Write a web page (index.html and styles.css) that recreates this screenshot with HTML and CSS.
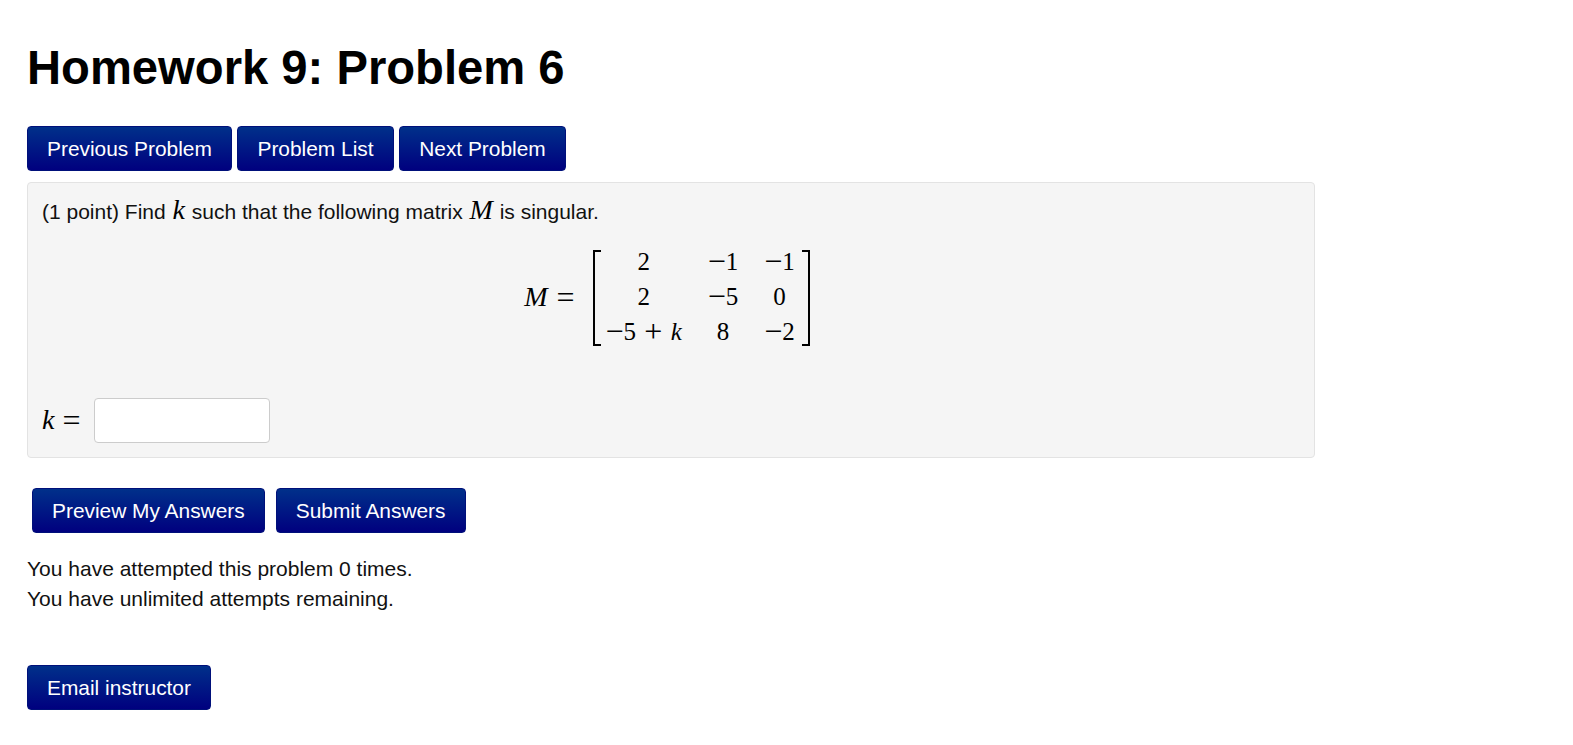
FILE: index.html
```html
<!DOCTYPE html>
<html lang="en">

<head>
    <meta charset="UTF-8">
    <title>Homework 9: Problem 6</title>
    <link rel="stylesheet" href="styles.css">
</head>

<body>
    <div class="container">
        <h1>Homework 9: Problem 6</h1>
        <div class="nav">
            <a class="btn" href="#">Previous Problem</a>
            <a class="btn" href="#">Problem List</a>
            <a class="btn" href="#">Next Problem</a>
        </div>
        <div class="well">
            <p class="question">(1 point) Find <i class="math inline">k</i> such that the following matrix <i class="math inline">M</i> is singular.</p>
            <div class="display math">
                <span class="lhs"><i class="big">M</i><span class="op eq">=</span></span>
                <div class="bracket left"></div>
                <table class="matrix">
                    <tr><td>2</td><td><span class="op">&minus;</span>1</td><td><span class="op">&minus;</span>1</td></tr>
                    <tr><td>2</td><td><span class="op">&minus;</span>5</td><td>0</td></tr>
                    <tr><td><span class="op">&minus;</span>5 <span class="op plus">+</span> <i>k</i></td><td>8</td><td><span class="op">&minus;</span>2</td></tr>
                </table>
                <div class="bracket right"></div>
            </div>
            <div class="answer">
                <span class="math"><i class="big">k</i><span class="op eq-small">=</span></span>
                <input class="answer-input" type="text">
            </div>
        </div>
        <div class="actions">
            <a class="btn" href="#">Preview My Answers</a>
            <a class="btn" href="#">Submit Answers</a>
        </div>
        <div class="attempts">
            <div>You have attempted this problem 0 times.</div>
            <div>You have unlimited attempts remaining.</div>
        </div>
        <div class="email">
            <a class="btn" href="#">Email instructor</a>
        </div>
    </div>
</body>

</html>
```

FILE: styles.css
```css
body {
    margin: 0;
    background: #fff;
    color: #111;
    font-family: 'Liberation Sans', Arial, sans-serif;
    font-size: 21px;
    line-height: 30px;
}

.container {
    padding: 0 27px;
}

h1 {
    margin: 0;
    padding-top: 40px;
    color: #000;
    font-size: 47.2px;
    line-height: 56px;
    font-weight: bold;
}

.nav {
    display: flex;
    gap: 5.6px;
    margin-top: 30px;
}

.btn {
    display: block;
    box-sizing: border-box;
    height: 45px;
    padding: 0 19px;
    border: 1px solid #00107a;
    border-radius: 4px;
    background: linear-gradient(to bottom, #00308a, #00007f);
    color: #fff;
    font-size: 20.9px;
    line-height: 43px;
    text-decoration: none;
}

.well {
    box-sizing: border-box;
    width: 1288px;
    height: 276px;
    margin-top: 11px;
    padding: 14px 14px 0;
    background: #f5f5f5;
    border: 1px solid #e3e3e3;
    border-radius: 4px;
}

.question {
    margin: 0;
}

.math {
    font-family: 'Liberation Serif', 'Times New Roman', serif;
    font-size: 25px;
    color: #000;
}

.inline {
    margin: 0 1px;
    font-size: 28px;
    line-height: 20px;
}

.big {
    font-size: 28px;
}

.op {
    font-size: 32px;
    line-height: 20px;
    vertical-align: -2px;
}

.eq {
    margin-left: 9px;
}

.eq-small {
    margin-left: 8px;
}

.plus {
    margin: 0 2px;
}

.display {
    display: flex;
    justify-content: center;
    align-items: center;
    margin-top: 18px;
    padding-right: 8px;
}

.lhs {
    margin-right: 18px;
}

.bracket {
    box-sizing: border-box;
    width: 8px;
    height: 96px;
    border: 2px solid #000;
}

.bracket.left {
    border-right: 0;
}

.bracket.right {
    border-left: 0;
}

.matrix {
    border-collapse: collapse;
}

.matrix td {
    padding: 0 13px 2px;
    text-align: center;
    line-height: 33px;
}

.matrix td:first-child {
    padding-left: 5px;
}

.matrix td:last-child {
    padding-right: 7px;
}

.answer {
    display: flex;
    align-items: center;
    gap: 14px;
    margin-top: 48px;
}

.answer-input {
    box-sizing: border-box;
    width: 176px;
    height: 45px;
    background: #fff;
    border: 1px solid #ccc;
    border-radius: 4px;
}

.actions {
    display: flex;
    gap: 11px;
    margin-top: 30px;
    padding-left: 5px;
}

.attempts {
    margin-top: 21px;
}

.email {
    display: flex;
    margin-top: 51px;
}
```
